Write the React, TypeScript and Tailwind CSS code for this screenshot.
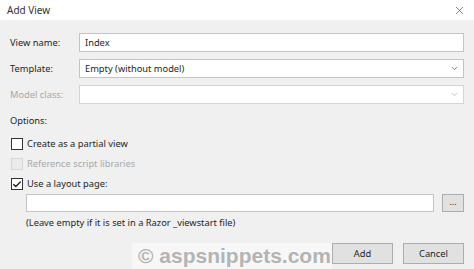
import { X, ChevronDown, Check } from "lucide-react";

const font = { fontFamily: '"Noto Sans", "Open Sans", sans-serif' };

const Row = ({ label, disabled, children }: { label: string; disabled?: boolean; children: React.ReactNode }) => (
    <div className="flex items-center h-[19px]">
        <span className={`w-[69px] shrink-0 ${disabled ? "text-[#a8a8a8]" : "text-[#1e1e1e]"}`}>{label}</span>
        {children}
    </div>
);

const Box = ({ checked, disabled }: { checked?: boolean; disabled?: boolean }) => (
    <span
        className={`w-[12px] h-[12px] shrink-0 border flex items-center justify-center ${
            disabled ? "border-[#d6d6d6] bg-[#ebebeb]" : "border-[#333] bg-white"
        }`}
    >
        {checked && <Check size={11} strokeWidth={3.2} className="text-[#222]" />}
    </span>
);

export default function App() {
    return (
        <div className="w-[474px] h-[269px] bg-[#f0f0f0] text-[9.3px] leading-[16px] flex flex-col" style={font}>
            <div className="h-[25px] bg-white flex items-center justify-between pl-[7px] pr-[8px] text-[#333]">
                <span className="text-[10px]">Add View</span>
                <X size={13} strokeWidth={1.3} className="text-[#555]" />
            </div>
            <div className="flex flex-col pl-[10px] pr-[10px] pt-[13px]">
                <div className="flex flex-col gap-[7px]">
                    <Row label="View name:">
                        <div className="flex-1 h-full bg-white border border-[#c4c4c4] px-[5px] flex items-center text-[#1e1e1e]">Index</div>
                    </Row>
                    <Row label="Template:">
                        <div className="flex-1 h-full bg-white border border-[#c4c4c4] pl-[5px] pr-[4px] flex items-center justify-between text-[#1e1e1e]">
                            <span>Empty (without model)</span>
                            <ChevronDown size={9} strokeWidth={2.2} className="text-[#666]" />
                        </div>
                    </Row>
                    <Row label="Model class:" disabled>
                        <div className="flex-1 h-full bg-white border border-[#d4d4d4] pr-[4px] flex items-center justify-end">
                            <ChevronDown size={9} strokeWidth={2.2} className="text-[#b8b8b8]" />
                        </div>
                    </Row>
                </div>
                <div className="mt-[9px] text-[#1e1e1e]">Options:</div>
                <div className="flex flex-col mt-[5px] pl-[1px]">
                    <label className="flex items-center gap-[4px] h-[20px] text-[#1e1e1e]">
                        <Box />
                        Create as a partial view
                    </label>
                    <label className="flex items-center gap-[4px] h-[20px] text-[#a8a8a8]">
                        <Box disabled />
                        Reference script libraries
                    </label>
                    <label className="flex items-center gap-[4px] h-[20px] text-[#1e1e1e]">
                        <Box checked />
                        Use a layout page:
                    </label>
                </div>
                <div className="flex items-center gap-[8px] pl-[16px] mt-[0px]">
                    <div className="flex-1 h-[18px] bg-white border border-[#c4c4c4]" />
                    <button className="w-[22px] h-[18px] bg-[#e1e1e1] border border-[#adadad] flex items-center justify-center text-[#333] text-[9px] leading-none pb-[3px]">
                        ...
                    </button>
                </div>
                <div className="pl-[16px] mt-[3px] text-[#1e1e1e]">(Leave empty if it is set in a Razor _viewstart file)</div>
                <div className="flex items-end justify-end mt-[12px]">
                    <div className="h-[26px] w-[200px] bg-[#f7f7f7] flex items-center pl-[6px]">
                        <span
                            className="text-[21px] font-bold text-[#b4b4b4]"
                            style={{ fontFamily: '"Liberation Sans", Arial, sans-serif' }}
                        >
                            © aspsnippets.com
                        </span>
                    </div>
                    <div className="flex gap-[10px] self-start">
                        <button className="w-[61px] h-[21px] bg-[#e1e1e1] border border-[#adadad] text-[#1e1e1e]">Add</button>
                        <button className="w-[61px] h-[21px] bg-[#e1e1e1] border border-[#adadad] text-[#1e1e1e]">Cancel</button>
                    </div>
                </div>
            </div>
        </div>
    );
}
